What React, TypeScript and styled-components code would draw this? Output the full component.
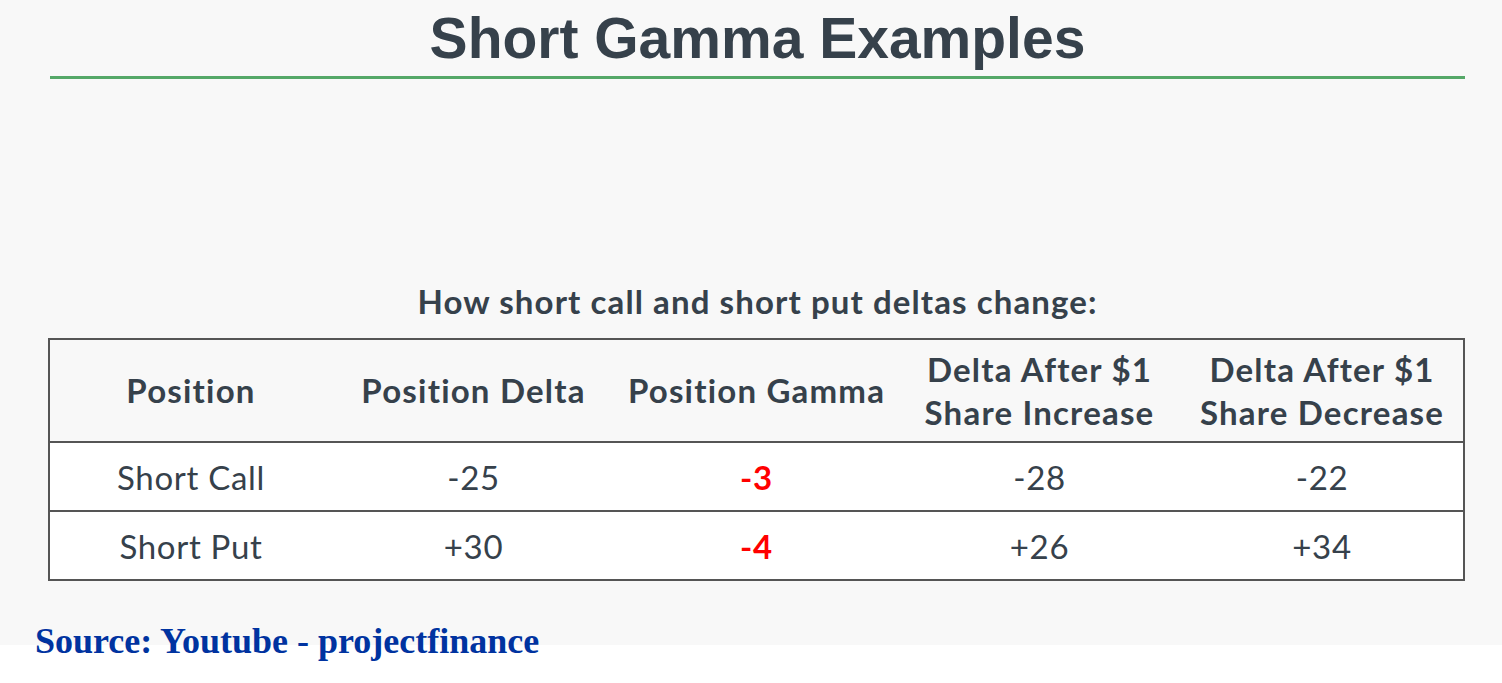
import React from "react";
import styled, { createGlobalStyle } from "styled-components";

const Global = createGlobalStyle`
  html, body { margin: 0; padding: 0; background: #ffffff; }
  body { width: 1502px; height: 683px; overflow: hidden; }
`;

const Slide = styled.div`
  height: 645px;
  background: #f8f8f8;
  display: flex;
  flex-direction: column;
`;

const Header = styled.header`
  margin: 0 37px 0 50px;
  border-bottom: 3px solid #55a868;
  padding-top: 10px;
  height: 66px;
`;

const Title = styled.h1`
  margin: 0;
  font-family: "Liberation Sans", Arial, sans-serif;
  font-weight: 700;
  font-size: 57px;
  line-height: 57px;
  color: #36414b;
  text-align: center;
`;

const Subtitle = styled.h2`
  margin: 202px 37px 0 50px;
  font-family: Lato, "Open Sans", sans-serif;
  font-weight: 700;
  font-size: 33px;
  letter-spacing: 1.1px;
  line-height: 40px;
  color: #36414b;
  text-align: center;
`;

const Table = styled.table`
  margin: 17px 0 0 48px;
  width: 1417px;
  border-collapse: collapse;
  border: 2px solid #555;
  table-layout: fixed;
  font-family: Lato, "Open Sans", sans-serif;
  color: #36414b;
`;

const HeadCell = styled.th`
  height: 101px;
  padding: 0;
  background: #f8f8f8;
  font-weight: 700;
  font-size: 33px;
  letter-spacing: 1.2px;
  line-height: 43px;
  text-align: center;
  vertical-align: middle;
  border-bottom: 2px solid #555;
`;

const Cell = styled.td<{ $alert?: boolean }>`
  height: 67px;
  padding: 0;
  background: #ffffff;
  font-size: 33px;
  letter-spacing: 0.7px;
  font-weight: ${(p) => (p.$alert ? 700 : 400)};
  color: ${(p) => (p.$alert ? "#ff0000" : "#36414b")};
  text-align: center;
  vertical-align: middle;
  border-bottom: 2px solid #555;
`;

const Source = styled.p`
  margin: -24px 0 0 35px;
  font-family: "Liberation Serif", "Times New Roman", serif;
  font-weight: 700;
  font-size: 36px;
  line-height: 40px;
  color: #0033a0;
  position: relative;
`;

const rows = [
  { pos: "Short Call", delta: "-25", gamma: "-3", up: "-28", down: "-22" },
  { pos: "Short Put", delta: "+30", gamma: "-4", up: "+26", down: "+34" },
];

export default function App() {
  return (
    <>
      <Global />
      <Slide>
        <Header>
          <Title>Short Gamma Examples</Title>
        </Header>
        <Subtitle>How short call and short put deltas change:</Subtitle>
        <Table>
          <thead>
            <tr>
              <HeadCell>Position</HeadCell>
              <HeadCell>Position Delta</HeadCell>
              <HeadCell>Position Gamma</HeadCell>
              <HeadCell>
                Delta After $1
                <br />
                Share Increase
              </HeadCell>
              <HeadCell>
                Delta After $1
                <br />
                Share Decrease
              </HeadCell>
            </tr>
          </thead>
          <tbody>
            {rows.map((r) => (
              <tr key={r.pos}>
                <Cell>{r.pos}</Cell>
                <Cell>{r.delta}</Cell>
                <Cell $alert>{r.gamma}</Cell>
                <Cell>{r.up}</Cell>
                <Cell>{r.down}</Cell>
              </tr>
            ))}
          </tbody>
        </Table>
      </Slide>
      <Source>Source: Youtube - projectfinance</Source>
    </>
  );
}
